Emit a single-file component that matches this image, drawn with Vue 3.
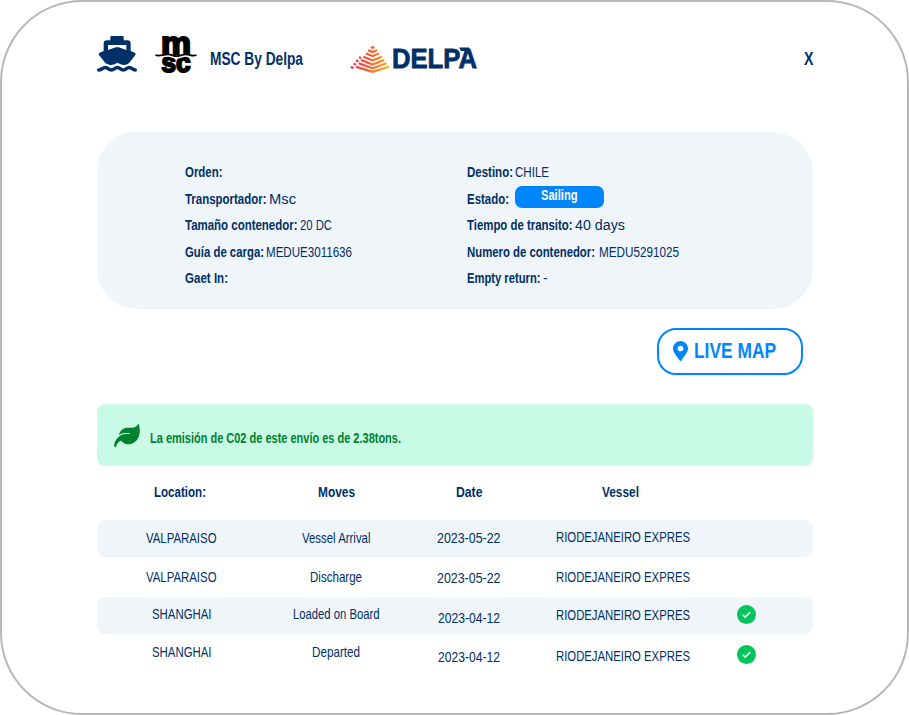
<template>
    <div class="modal">
        <header class="header">
            <svg class="ship" viewBox="21 33 120 108">
                <path d="M61 46V37Q61 33 65 33H97Q101 33 101 37V46H112Q122 46 122 56V78L134 83Q139 85 136 90L118 113Q110 121 101 120Q92 119 82 113Q70 121 61 120Q53 119 46 114L27 90Q24 85 29 83L41 78V56Q41 46 51 46ZM54 60V75L78 67Q82 66 86 67L109 75V60Z" fill-rule="evenodd"/>
                <path class="ship_wave" d="M26 135C34 135 38 127.500 46 127.500C54 127.500 55 135 64 135C73 135 74 127.500 82 127.500C90 127.500 91 135 100 135C109 135 110 127.500 118 127.500C126 127.500 127 135 136 135"/>
            </svg>
            <svg class="msc" viewBox="0 0 42 38">
                <text class="msc_text" x="6" y="18" font-size="31" textLength="30" lengthAdjust="spacingAndGlyphs">m</text>
                <text class="msc_text" x="6.500" y="36.200" font-size="27" textLength="29" lengthAdjust="spacingAndGlyphs">sc</text>
                <path class="msc_gap" d="M6 20.500C8 19.800 11 19.500 13 19.500C17 19.500 18 21.500 21.500 21.500C25 21.500 27 19.500 31 19.500C33 19.500 35 20 37 21"/>
                <path class="msc_wave" d="M.5 19C4 20.800 8 18.400 13 18.400C17 18.400 18 20.200 21.500 20.200C25 20.200 27 18.400 31 18.400C35 18.400 37.500 20.800 41.500 19"/>
            </svg>
            <FitText class="header_name" text="MSC By Delpa" :width="93"/>
            <svg class="delpa" viewBox="0 0 130 28">
                <defs>
                    <linearGradient id="fire" gradientUnits="userSpaceOnUse" x1="2" y1="16" x2="38" y2="24">
                        <stop offset="0" stop-color="#f5203a"/>
                        <stop offset=".45" stop-color="#fb5a2c"/>
                        <stop offset="1" stop-color="#ffab1c"/>
                    </linearGradient>
                </defs>
                <path class="delpa_layers" d="M20.800 2L22.500 2.800L24.500 2M18.200 5.200L22.500 7L27 5.200M16 8.400L22.500 11.200L29.200 8.400M13.300 11.700L22.500 15.400L31.800 11.700M11 15L22.500 19.500L34.200 15M8.700 18.300L22.500 23.300L36.600 18.300M6 21.800L22.500 26.800L39 21.800M9 12.200L11.300 13.100M6 15.500L8.500 16.500M3.500 18.600L6 19.600M.7 22L3.500 23"/>
                <text class="delpa_text" x="42" y="22.600" textLength="85" lengthAdjust="spacingAndGlyphs">DELPA</text>
                <path class="delpa_serif" d="M109 2.600H119V6H111Z"/>
            </svg>
            <div class="close"><FitText text="X" :width="9.500"/></div>
        </header>

        <section class="info">
            <div class="info_column" v-for="(column,i) in info" :key="i">
                <div class="info_row" v-for="item in column" :key="item.label">
                    <FitText class="bold" :text="item.label" :width="item.labelWidth"/>
                    <div class="badge" v-if="item.badge">
                        <FitText class="bold" :text="item.value" :width="item.width"/>
                    </div>
                    <FitText
                        v-else-if="item.value"
                        :text="item.value"
                        :width="item.width"
                        :class="{ wide: item.wide, spaced: item.spaced }"
                    />
                </div>
            </div>
        </section>

        <div class="map_line">
            <button class="map_button">
                <svg class="pin" viewBox="0 0 384 512">
                    <path d="M172 502C27 291 0 270 0 192a192 192 0 01384 0c0 78-27 99-172 310a24 24 0 01-40 0zM192 264a72 72 0 100-144 72 72 0 000 144z"/>
                </svg>
                <FitText text="LIVE MAP" :width="82"/>
            </button>
        </div>

        <div class="emission">
            <svg class="leaf" viewBox="0 0 26 23">
                <path d="M24.800 .2C26.600 5.500 26 12.500 22.500 16.600C19 20.600 13.500 21.300 9.300 18.700C8.500 18.200 7.500 17.300 7 16.500C4 18 3 20 2.200 22.300C1.800 23.300 .2 23 .1 21.900C.3 17 4.200 11 11 10H15.800V8.900H11C8.500 9 6.800 9.700 5 11C5.800 6.500 9.500 3.800 14 3.800C18.500 3.800 21.700 3.600 24 .4C24.300 0 24.700 0 24.800 .2Z"/>
            </svg>
            <FitText class="bold" text="La emisión de C02 de este envío es de 2.38tons." :width="251"/>
        </div>

        <div class="table">
            <div class="table_row table_head">
                <div class="cell" v-for="head in heads" :key="head.text">
                    <FitText class="bold" :text="head.text" :width="head.width"/>
                </div>
            </div>
            <div class="table_row" v-for="(move,i) in moves" :key="i">
                <div class="cell" v-for="cell in move.cells" :key="cell[0]">
                    <FitText :text="cell[0]" :width="cell[1]" :base="cell[2]"/>
                </div>
                <svg class="check" v-if="move.done" viewBox="0 0 19 19">
                    <circle cx="9.500" cy="9.500" r="9.500"/>
                    <path d="M5.700 9.800L8.200 12.100L13.300 7"/>
                </svg>
            </div>
        </div>
    </div>
</template>

<script setup>
import {h} from "vue";

// text condensed or expanded to a fixed width
const FitText = (props) => h("svg", {class:"fit", width:props.width, height:18}, [
    h("text", {
        x:0,
        y:props.base ?? 14,
        textLength:props.width,
        lengthAdjust:"spacingAndGlyphs"
    }, props.text)
])
FitText.props = ["text", "width", "base"]

const info = [
    [
        {label:"Orden:", labelWidth:37.5},
        {label:"Transportador:", labelWidth:81.5, value:"Msc", width:27, wide:true},
        {label:"Tamaño contenedor:", labelWidth:112.5, value:"20 DC", width:32},
        {label:"Guía de carga:", labelWidth:79, value:"MEDUE3011636", width:86},
        {label:"Gaet In:", labelWidth:43}
    ],
    [
        {label:"Destino:", labelWidth:46, value:"CHILE", width:34},
        {label:"Estado:", labelWidth:42, value:"Sailing", width:36.5, badge:true},
        {label:"Tiempo de transito:", labelWidth:105.5, value:"40 days", width:50, wide:true},
        {label:"Numero de contenedor:", labelWidth:128, value:"MEDU5291025", width:80, spaced:true},
        {label:"Empty return:", labelWidth:73.5, value:"-", width:4.5}
    ]
]

const heads = [
    {text:"Location:", width:52},
    {text:"Moves", width:37},
    {text:"Date", width:26.5},
    {text:"Vessel", width:37}
]

// cell: text, width, baseline
const moves = [
    {cells:[["VALPARAISO",70.5,14],["Vessel Arrival",68.5,14],["2023-05-22",63.5,14],["RIODEJANEIRO EXPRES",134,13]]},
    {cells:[["VALPARAISO",70.5,14],["Discharge",52,14],["2023-05-22",63.5,15],["RIODEJANEIRO EXPRES",134,14]]},
    {cells:[["SHANGHAI",59.5,13],["Loaded on Board",86.5,13],["2023-04-12",62,17],["RIODEJANEIRO EXPRES",134,14]], done:true},
    {cells:[["SHANGHAI",59.5,14],["Departed",48,14],["2023-04-12",62,19],["RIODEJANEIRO EXPRES",134,18]], done:true}
]
</script>

<style>
body{
    background: #ffffff;
}
</style>

<style scoped>
.modal{
    box-sizing: border-box;
    width: 909px;
    height: 715px;
    padding: 33px 94px 0 95px;
    border: solid 2px #b8b8b8;
    border-radius: 82px;
    background: #ffffff;
    color: #003068;
    font-family: "Liberation Sans", Arial, sans-serif;
    font-size: 14.4px;
}

.fit{
    display: block;
    flex: none;
    overflow: visible;
    fill: currentColor;
}

.bold{
    font-weight: bold;
}

.header{
    display: flex;
    height: 97px;
    font-size: 17.8px;
    font-weight: bold;
}

.ship{
    width: 40px;
    height: 36px;
    margin-top: 1px;
    overflow: visible;
    fill: #003068;
}

.ship .ship_wave{
    fill: none;
    stroke: #003068;
    stroke-width: 10.5;
    stroke-linecap: round;
}

.msc{
    width: 42px;
    height: 38px;
    margin: 1px 0 0 18px;
    overflow: visible;
}

.msc_text{
    font-weight: bold;
    stroke: #000000;
    stroke-width: 2;
}

.msc_gap{
    fill: none;
    stroke: #ffffff;
    stroke-width: 2.6;
}

.msc_wave{
    fill: none;
    stroke: #000000;
    stroke-width: 1.8;
}

.header_name{
    margin: 16px 0 0 13px;
}

.delpa{
    width: 130px;
    height: 28px;
    margin: 10px 0 0 47px;
    overflow: visible;
}

.delpa_layers{
    fill: none;
    stroke: url(#fire);
    stroke-width: 2.1;
}

.delpa_text{
    fill: #003068;
    stroke: #003068;
    stroke-width: .8;
    font-size: 28px;
    font-weight: bold;
}

.delpa_serif{
    fill: #003068;
}

.close{
    margin: 16px 0 0 auto;
}

.info{
    box-sizing: border-box;
    display: grid;
    grid-template-columns: 282px 1fr;
    height: 177px;
    padding: 31px 0 0 87.5px;
    border-radius: 40px;
    background: #eff5f8;
}

.info_row{
    display: flex;
    gap: 2.5px;
    height: 26.6px;
}

.info_row .wide{
    font-size: 14px;
}

.info_row .spaced{
    margin-left: 2px;
}

.badge{
    display: flex;
    justify-content: center;
    width: 89px;
    height: 22px;
    margin: -4px 0 0 4px;
    border-radius: 7px;
    background: #0086fc;
    color: #ffffff;
}

.map_line{
    display: flex;
    justify-content: flex-end;
    padding: 19px 10px 29px 0;
}

.map_button{
    box-sizing: border-box;
    display: flex;
    width: 146px;
    height: 47px;
    padding: 11px 0 0 14px;
    border: solid 2px #0086fc;
    border-radius: 19px;
    background: #ffffff;
    color: #0086fc;
    font-family: inherit;
    font-size: 22px;
    font-weight: bold;
}

.pin{
    width: 15px;
    height: 20px;
    margin-right: 6px;
    fill: #0086fc;
}

.map_button .fit{
    margin-top: 3px;
}

.emission{
    box-sizing: border-box;
    display: flex;
    height: 62px;
    padding: 20px 17px;
    border-radius: 8px;
    background: #c9fae5;
    color: #00812f;
}

.leaf{
    width: 26px;
    height: 23px;
    margin-right: 10px;
    fill: #00812f;
}

.emission .fit{
    margin-top: 5px;
}

.table_row{
    box-sizing: border-box;
    display: grid;
    grid-template-columns: 169px 140px 126px 181px 1fr;
    height: 37px;
    padding-top: 9px;
    border-radius: 8px;
}

.table_head{
    grid-template-columns: 166px 146px 120px 182px 1fr;
    height: 54px;
    padding-top: 17px;
}

.table_row:nth-child(even){
    background: #eff5f8;
}

.table_row:nth-child(3){
    height: 40px;
    padding-top: 11px;
}

.cell{
    display: flex;
    justify-content: center;
}

.check{
    width: 19px;
    height: 19px;
    margin: -1px 0 0 24px;
    fill: #00c45c;
}

.table_row:nth-child(5) .check{
    margin-top: 2px;
}

.check path{
    fill: none;
    stroke: #ffffff;
    stroke-width: 1.5;
}
</style>
